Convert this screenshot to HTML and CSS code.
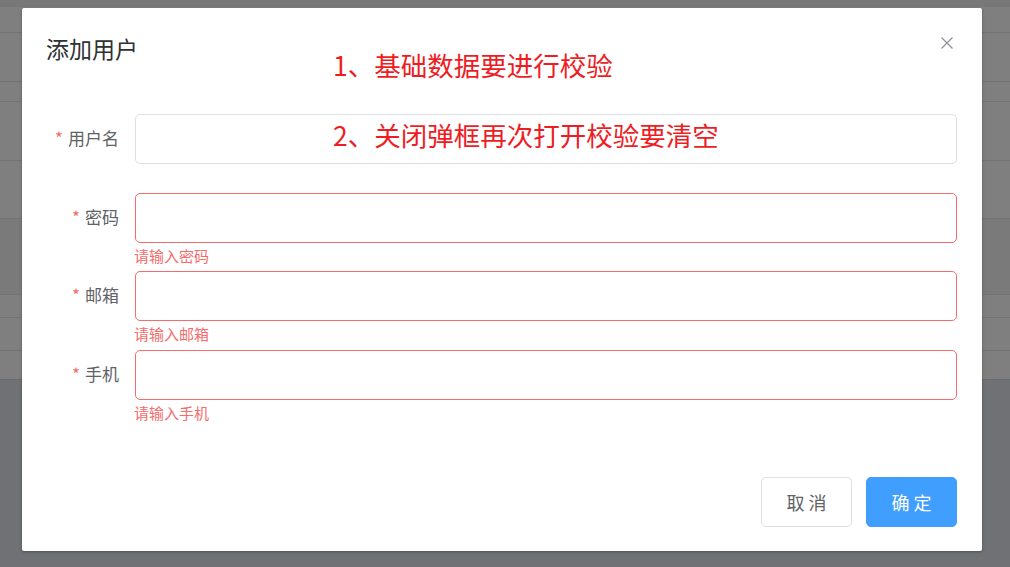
FILE: index.html
```html
<!DOCTYPE html>
<html lang="zh-CN">
<head>
<meta charset="utf-8">
<title>添加用户</title>
<link rel="stylesheet" href="styles.css">
</head>
<body>
<div class="page">
  <div class="topbar"></div>
  <div class="table">
    <div class="row r1"></div>
    <div class="row r2"></div>
    <div class="row r3"></div>
    <div class="row r4"></div>
    <div class="row r5"></div>
    <div class="row r6 dark"></div>
    <div class="row r7"></div>
    <div class="row r8"></div>
    <div class="row r9 last"></div>
  </div>
</div>

<div class="dialog">
  <div class="dialog-header">
    <span class="dialog-title">添加用户</span>
    <button class="dialog-close" aria-label="关闭">
      <svg width="12" height="12" viewBox="0 0 12 12"><path d="M0.5 0.5 L11.5 11.5 M11.5 0.5 L0.5 11.5" stroke="#909399" stroke-width="1.3" fill="none"/></svg>
    </button>
  </div>

  <form class="form">
    <div class="form-item">
      <label class="form-label"><span class="req">*</span>用户名</label>
      <div class="form-content"><input class="input" type="text"></div>
    </div>
    <div class="form-item">
      <label class="form-label"><span class="req">*</span>密码</label>
      <div class="form-content"><input class="input is-error" type="password"><div class="error">请输入密码</div></div>
    </div>
    <div class="form-item">
      <label class="form-label"><span class="req">*</span>邮箱</label>
      <div class="form-content"><input class="input is-error" type="text"><div class="error">请输入邮箱</div></div>
    </div>
    <div class="form-item">
      <label class="form-label"><span class="req">*</span>手机</label>
      <div class="form-content"><input class="input is-error" type="text"><div class="error">请输入手机</div></div>
    </div>
  </form>

  <div class="dialog-footer">
    <button class="btn btn-default">取消</button>
    <button class="btn btn-primary">确定</button>
  </div>

  <div class="note note1">1、基础数据要进行校验</div>
  <div class="note note2">2、关闭弹框再次打开校验要清空</div>
</div>
</body>
</html>
```

FILE: styles.css
```css
* { box-sizing: border-box; }
html, body {
  margin: 0;
  padding: 0;
  width: 1010px;
  height: 567px;
  overflow: hidden;
  background: #707174;
  font-family: "Noto Sans CJK SC", "Noto Sans", "Liberation Sans", sans-serif;
}

/* background page seen through the overlay */
.page { width: 100%; }
.topbar { height: 7px; background: #787878; }
.table { background: #7f7f7f; }
.row { border-bottom: 1px solid #737373; }
.row.dark { background: #7a7a7a; }
.row.last { border-bottom: 1px solid #6a6b6d; }
.r1 { height: 26px; }
.r2 { height: 49px; }
.r3 { height: 20px; }
.r4 { height: 59px; }
.r5 { height: 58px; }
.r6 { height: 76px; }
.r7 { height: 23px; }
.r8 { height: 33px; }
.r9 { height: 29px; }

/* dialog */
.dialog {
  position: absolute;
  left: 22px;
  top: 8px;
  width: 960px;
  height: 543px;
  background: #fff;
  border-radius: 2px;
  box-shadow: 0 1px 3px rgba(0, 0, 0, 0.3);
  display: flex;
  flex-direction: column;
}
.dialog-header {
  position: relative;
  padding: 25px 24px 0 24px;
  height: 56px;
}
.dialog-title {
  font-size: 23px;
  line-height: 31px;
  color: #303133;
}
.dialog-close {
  position: absolute;
  top: 29px;
  right: 29px;
  width: 12px;
  height: 12px;
  padding: 0;
  border: 0;
  background: transparent;
  display: block;
}
.dialog-close svg { display: block; }

.note {
  position: absolute;
  z-index: 2;
  left: 311px;
  font-size: 26.5px;
  line-height: 30px;
  color: #ee1d24;
  white-space: nowrap;
}
.note1 { top: 42px; }
.note2 { top: 112px; }

/* form */
.form {
  margin: 0;
  padding: 50px 25px 0 24px;
}
.form-item {
  display: flex;
  align-items: center;
  margin-bottom: 28.7px;
}
.form-label {
  width: 89px;
  flex: none;
  text-align: right;
  padding-right: 16px;
  font-size: 17px;
  color: #606266;
  line-height: 24px;
  margin-top: -2px;
}
.req {
  color: #f56c6c;
  margin-right: 5px;
}
.form-content {
  position: relative;
  flex: 1;
}
.input {
  display: block;
  width: 100%;
  height: 50px;
  border: 1px solid #dcdfe6;
  border-radius: 5px;
  background: #fff;
  padding: 0 18px;
  font: inherit;
  outline: none;
}
.input.is-error { border-color: #f56c6c; }
.error {
  position: absolute;
  left: -1px;
  top: 100%;
  padding-top: 5px;
  font-size: 15px;
  line-height: 15px;
  color: #f56c6c;
  white-space: nowrap;
}

/* footer */
.dialog-footer {
  margin-top: auto;
  display: flex;
  justify-content: flex-end;
  gap: 14px;
  padding: 0 25px 24px 0;
}
.btn {
  width: 91px;
  height: 50px;
  border-radius: 5px;
  font-family: inherit;
  font-size: 18px;
  letter-spacing: 4px;
  padding: 0 0 0 4px;
  cursor: pointer;
}
.btn-default {
  background: #fff;
  border: 1px solid #dcdfe6;
  color: #606266;
}
.btn-primary {
  background: #409eff;
  border: 1px solid #409eff;
  color: #fff;
}
```
